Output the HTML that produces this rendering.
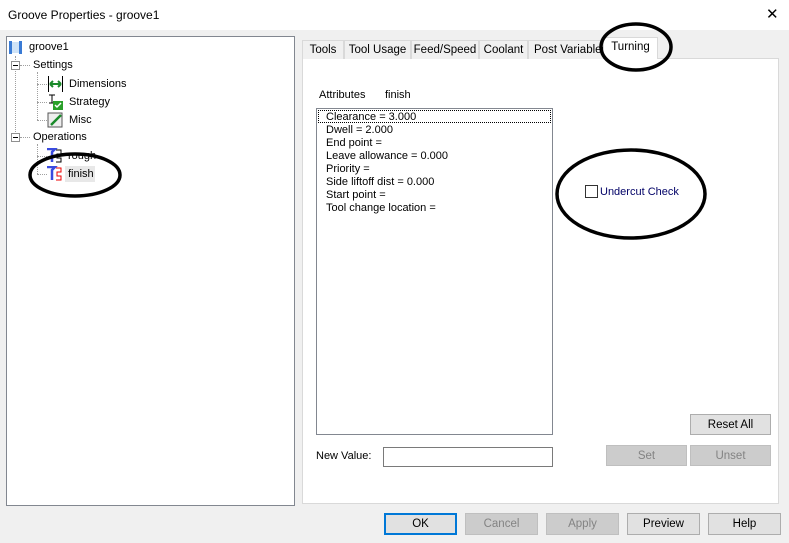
<!DOCTYPE html>
<html><head><style>
*{box-sizing:border-box}
body{margin:0;width:789px;height:543px;background:#f0f0f0;font-family:"Liberation Sans",sans-serif;font-size:11px;color:#000;position:relative;overflow:hidden}
.a{position:absolute}
.title{left:0;top:0;width:789px;height:30px;background:#fff}
.btn{position:absolute;border:1px solid #adadad;background:#e1e1e1;text-align:center;font-size:11.5px;line-height:20px}
.dis{color:#838383;background:#cccccc;border-color:#bfbfbf}
.tab{position:absolute;top:40px;height:19px;border:1px solid #d9d9d9;border-bottom:none;background:#f0f0f0;font-size:11.5px;line-height:18px;text-align:center;white-space:nowrap;overflow:hidden}
.t{position:absolute;font-size:11px;white-space:nowrap}
.dot{position:absolute;border-left:1px dotted #a0a0a0}
.doth{position:absolute;border-top:1px dotted #a0a0a0}
</style></head><body>
<div class="a title"></div>
<div class="t" style="left:8px;top:8px;font-size:12px">Groove Properties - groove1</div>
<div class="t" style="left:766px;top:5px;font-size:15px;font-weight:300">✕</div>

<!-- tree -->
<div class="a" style="left:6px;top:36px;width:289px;height:470px;background:#fff;border:1px solid #828790"></div>
<svg class="a" style="left:8px;top:40px" width="16" height="16"><rect x="1" y="1" width="3" height="13" fill="#3a7bd5"/><rect x="11" y="1" width="3" height="13" fill="#3a7bd5"/><rect x="4" y="2" width="7" height="11" fill="#cfe3f7"/></svg>
<div class="t" style="left:29px;top:41px">groove1</div>
<div class="dot" style="left:15px;top:56px;height:80px"></div>
<div class="a" style="left:11px;top:61px;width:9px;height:9px;border:1px solid #909090;background:#fff"></div><div class="a" style="left:13px;top:65px;width:5px;height:1px;background:#000"></div>
<div class="doth" style="left:20px;top:65px;width:10px"></div>
<div class="t" style="left:33px;top:59px">Settings</div>
<div class="dot" style="left:37px;top:72px;height:48px"></div>
<div class="doth" style="left:37px;top:84px;width:10px"></div>
<div class="doth" style="left:37px;top:102px;width:10px"></div>
<div class="doth" style="left:37px;top:120px;width:10px"></div>
<svg class="a" style="left:47px;top:76px" width="18" height="16"><rect x="1" y="0" width="1" height="16" fill="#000"/><rect x="15" y="0" width="1" height="16" fill="#000"/><path d="M3 8h11M3 8l3-3M3 8l3 3M14 8l-3-3M14 8l-3 3" stroke="#1a8a2a" stroke-width="2" fill="none"/></svg>
<div class="t" style="left:69px;top:78px">Dimensions</div>
<svg class="a" style="left:47px;top:94px" width="18" height="16"><path d="M2 1h6M5 1v8M2 9h6" stroke="#000" fill="none"/><rect x="6" y="7" width="10" height="9" fill="#2aa02a"/><path d="M8 11l2 2 4-4" stroke="#fff" stroke-width="1.5" fill="none"/></svg>
<div class="t" style="left:69px;top:96px">Strategy</div>
<svg class="a" style="left:47px;top:112px" width="18" height="16"><rect x="1" y="1" width="14" height="14" fill="#eee" stroke="#555"/><path d="M4 13L14 3" stroke="#1a8a2a" stroke-width="2.5"/></svg>
<div class="t" style="left:69px;top:114px">Misc</div>
<div class="a" style="left:11px;top:133px;width:9px;height:9px;border:1px solid #909090;background:#fff"></div><div class="a" style="left:13px;top:137px;width:5px;height:1px;background:#000"></div>
<div class="doth" style="left:20px;top:137px;width:10px"></div>
<div class="t" style="left:33px;top:131px">Operations</div>
<div class="dot" style="left:37px;top:144px;height:30px"></div>
<div class="doth" style="left:37px;top:156px;width:10px"></div>
<div class="doth" style="left:37px;top:174px;width:10px"></div>
<svg class="a" style="left:46px;top:148px" width="18" height="16"><path d="M1 1h8l-3 3v10" stroke="#3a4be0" stroke-width="2.5" fill="none"/><path d="M10 2h5v4h-4v4h4v4h-5" stroke="#000" fill="none"/></svg>
<div class="t" style="left:68px;top:150px">rough</div>
<svg class="a" style="left:46px;top:166px" width="18" height="16"><path d="M1 1h8l-3 3v10" stroke="#3a4be0" stroke-width="2.5" fill="none"/><path d="M10 2h5v4h-4v4h4v4h-5" stroke="#e00" fill="none"/></svg>
<div class="a" style="left:65px;top:166px;width:30px;height:16px;background:#e8e8e8"></div>
<div class="t" style="left:68px;top:168px">finish</div>

<!-- tabs -->
<div class="a" style="left:302px;top:58px;width:477px;height:446px;background:#fff;border:1px solid #d9d9d9"></div>
<div class="tab" style="left:302px;width:42px">Tools</div>
<div class="tab" style="left:344px;width:67px">Tool Usage</div>
<div class="tab" style="left:411px;width:68px">Feed/Speed</div>
<div class="tab" style="left:479px;width:49px">Coolant</div>
<div class="tab" style="left:528px;width:77px;text-align:left;padding-left:5px">Post Variables</div>
<div class="tab" style="left:603px;top:37px;height:22px;width:55px;background:#fff">Turning</div>

<div class="t" style="left:319px;top:89px">Attributes</div>
<div class="t" style="left:385px;top:89px">finish</div>
<div class="a" style="left:316px;top:108px;width:237px;height:327px;background:#fff;border:1px solid #828790"></div>
<div class="a" style="left:318px;top:110px;width:233px;height:13px;border:1px dotted #000"></div>
<div class="t" style="left:326px;top:111px;line-height:13px">Clearance = 3.000<br>Dwell = 2.000<br>End point =<br>Leave allowance = 0.000<br>Priority =<br>Side liftoff dist = 0.000<br>Start point =<br>Tool change location =</div>

<div class="a" style="left:585px;top:185px;width:13px;height:13px;border:1px solid #333;background:#fff"></div>
<div class="t" style="left:600px;top:186px;color:#000066">Undercut Check</div>

<div class="btn" style="left:690px;top:414px;width:81px;height:21px">Reset All</div>
<div class="t" style="left:316px;top:450px">New Value:</div>
<div class="a" style="left:383px;top:447px;width:170px;height:20px;background:#fff;border:1px solid #7a7a7a"></div>
<div class="btn dis" style="left:606px;top:445px;width:81px;height:21px">Set</div>
<div class="btn dis" style="left:690px;top:445px;width:81px;height:21px">Unset</div>

<div class="btn" style="left:384px;top:513px;width:73px;height:22px;border:2px solid #0078d7;line-height:18px">OK</div>
<div class="btn dis" style="left:465px;top:513px;width:73px;height:22px">Cancel</div>
<div class="btn dis" style="left:546px;top:513px;width:73px;height:22px">Apply</div>
<div class="btn" style="left:627px;top:513px;width:73px;height:22px">Preview</div>
<div class="btn" style="left:708px;top:513px;width:73px;height:22px">Help</div>

<svg class="a" style="left:0;top:0" width="789" height="543">
<g fill="none" stroke="#000" stroke-width="3.5">
<ellipse cx="636" cy="47" rx="35" ry="23"/>
<ellipse cx="75" cy="175" rx="45" ry="21"/>
<ellipse cx="631" cy="194" rx="74" ry="44"/>
</g></svg>
</body></html>
